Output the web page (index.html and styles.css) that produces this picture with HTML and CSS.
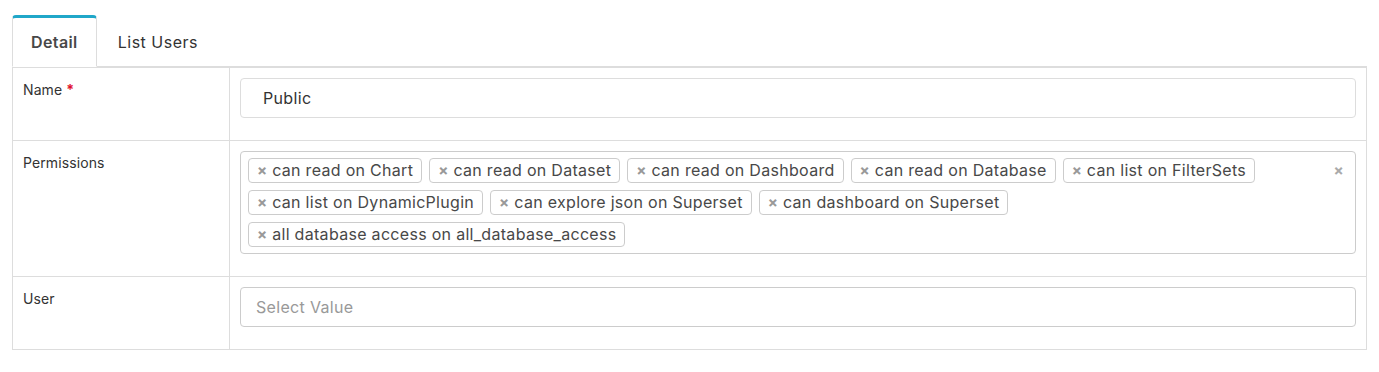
FILE: index.html
```html
<!DOCTYPE html>
<html lang="en">
<head>
<meta charset="utf-8">
<title>Role</title>
<link rel="stylesheet" href="styles.css">
</head>
<body>
<div class="page">
  <ul class="tabs">
    <li class="tab active">Detail</li>
    <li class="tab">List Users</li>
  </ul>
  <div class="table">
    <div class="row">
      <div class="label">Name <span class="req">*</span></div>
      <div class="value">
        <div class="input name-input">Public</div>
      </div>
    </div>
    <div class="row">
      <div class="label">Permissions</div>
      <div class="value">
        <div class="input multi">
          <div class="tags">
            <span class="tag"><span class="x">×</span>can read on Chart</span>
            <span class="tag"><span class="x">×</span>can read on Dataset</span>
            <span class="tag"><span class="x">×</span>can read on Dashboard</span>
            <span class="tag"><span class="x">×</span>can read on Database</span>
            <span class="tag"><span class="x">×</span>can list on FilterSets</span>
            <span class="tag"><span class="x">×</span>can list on DynamicPlugin</span>
            <span class="tag"><span class="x">×</span>can explore json on Superset</span>
            <span class="tag"><span class="x">×</span>can dashboard on Superset</span>
            <span class="tag"><span class="x">×</span>all database access on all_database_access</span>
          </div>
          <span class="clear">×</span>
        </div>
      </div>
    </div>
    <div class="row last">
      <div class="label">User</div>
      <div class="value">
        <div class="input select-input">Select Value</div>
      </div>
    </div>
  </div>
</div>
</body>
</html>
```
FILE: styles.css
```css
html, body {
  margin: 0;
  background: #fff;
}
body {
  font-family: Inter, "Noto Sans", "Liberation Sans", sans-serif;
  color: #333;
}
.page {
  padding: 15px 12px 0 12px;
}
.tabs {
  list-style: none;
  margin: 0;
  padding: 0;
  display: flex;
  border-bottom: 1px solid #ddd;
}
.tab {
  font-size: 16px;
  letter-spacing: 0.5px;
  line-height: 48px;
  padding: 0 18px;
  border: 1px solid transparent;
  border-top: 3px solid transparent;
  margin-right: 2px;
  margin-bottom: -1px;
  color: #333;
}
.tab.active {
  font-weight: 600;
  letter-spacing: 0.4px;
  color: #484848;
  background: #fff;
  border-color: #ddd;
  border-top-color: #20a7c9;
  border-bottom-color: #fff;
  border-radius: 4px 4px 0 0;
}
.table {
  border: 1px solid #ddd;
}
.row {
  display: grid;
  grid-template-columns: 217px 1fr;
  border-bottom: 1px solid #ddd;
}
.row.last {
  border-bottom: none;
}
.label {
  font-size: 14px;
  letter-spacing: 0.1px;
  line-height: 19px;
  padding: 12px 10px 10px 10px;
  border-right: 1px solid #ddd;
  color: #333;
}
.req {
  color: #e0102d;
  font-weight: 700;
}
.value {
  padding: 10px 10px 22px 10px;
}
.input {
  box-sizing: border-box;
  border: 1px solid #ccc;
  border-radius: 4px;
  font-size: 16px;
  letter-spacing: 0.33px;
}
.name-input {
  border-color: #ddd;
  height: 40px;
  line-height: 38px;
  padding: 0 22px;
  color: #333;
}
.select-input {
  height: 40px;
  line-height: 38px;
  padding: 0 15px;
  color: #999;
}
.multi {
  display: flex;
  align-items: flex-start;
  padding: 6px 7px;
}
.tags {
  flex: 1;
  display: flex;
  flex-wrap: wrap;
  gap: 7px 7px;
}
.tag {
  display: inline-flex;
  align-items: center;
  box-sizing: border-box;
  height: 25px;
  border: 1px solid #ccc;
  border-radius: 4px;
  padding: 0 8px 0 8px;
  color: #484848;
  font-size: 16px;
  letter-spacing: 0.3px;
  line-height: 23px;
  white-space: nowrap;
}
.x {
  color: #999;
  font-weight: 700;
  font-size: 15px;
  letter-spacing: 0;
  margin-right: 5px;
}
.clear {
  color: #aaa;
  font-weight: 700;
  font-size: 15px;
  line-height: 25px;
  padding: 0 4px 0 20px;
}
```
